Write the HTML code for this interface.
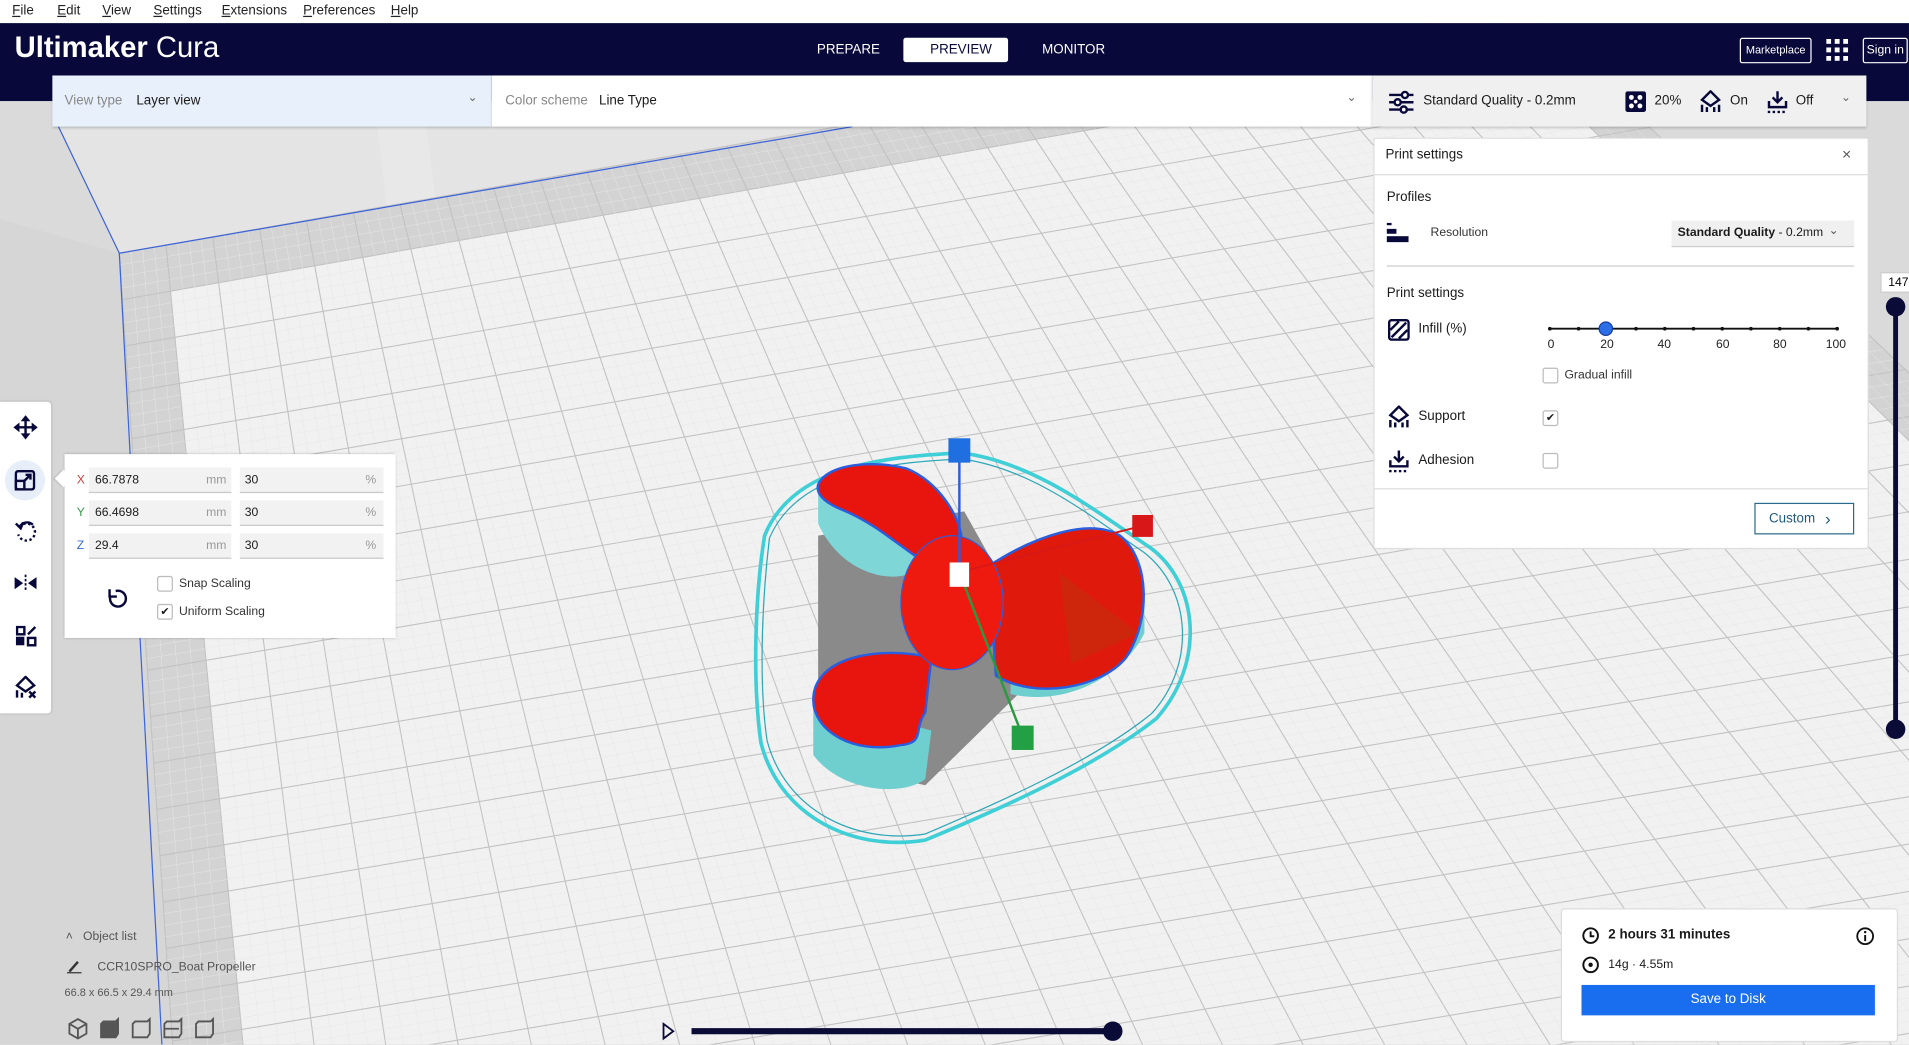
<!DOCTYPE html>
<html><head><meta charset="utf-8">
<style>
html,body{margin:0;padding:0;width:1909px;height:1045px;overflow:hidden;background:#dcdcdc}
#w{position:absolute;left:0;top:0;width:1568px;height:858px;transform:scale(1.21747);transform-origin:0 0;font-family:"Liberation Sans",sans-serif;color:#1a1a1a;overflow:hidden}
.a{position:absolute}
.t{position:absolute;white-space:nowrap}
.menu span{position:absolute;top:3px;font-size:11px;color:#222}
.fld{position:absolute;background:#f2f2f2;border-bottom:1px solid #c8c8c8;height:20px;font-size:10px}
.cb{position:absolute;width:11px;height:11px;border:1px solid #bbb;border-radius:2px;background:#fff}
</style></head><body>
<div id="w">
<svg class="a" style="left:0;top:0" width="1568" height="858" id="scene">
 <rect width="1568" height="858" fill="#dadada"/>
 <polygon points="48,104 98,208 700,104" fill="#e4e4e4"/>
 <polygon points="0,180 98,208 150,858 0,858" fill="#d6d6d6"/>
 <polygon points="310,104 350,104 360,180 320,190" fill="#e9e9e9" opacity=".8"/>
 <g id="plate"></g>
 <line x1="48" y1="104" x2="98" y2="208" stroke="#3c64d8" stroke-width="1"/>
 <line x1="98" y1="208" x2="700" y2="104" stroke="#3c64d8" stroke-width="1"/>
 <line x1="98" y1="208" x2="133" y2="858" stroke="#3c64d8" stroke-width="1"/>
 <!-- object -->
 <polygon points="672,440 672,625 760,645 862,545 792,420" fill="#8a8a8a"/>
 <path d="M628,440 C650,385 720,375 790,372 C850,380 900,420 945,450 C985,480 990,545 950,590 C900,630 820,665 760,690 C700,700 640,670 625,610 C618,560 620,490 628,440 Z" fill="none" stroke="#3fcfd6" stroke-width="3"/>
 <path d="M632,442 C654,390 722,380 790,377 C848,385 896,424 940,454 C978,484 983,545 946,586 C897,626 818,660 760,685 C703,694 645,666 630,608 C623,560 626,492 632,442 Z" fill="none" stroke="#2aa7b8" stroke-width="1"/>
 <path d="M672,400 L672,430 C690,470 730,480 750,470 L760,440 Z" fill="#7fd6d6"/>
 <path d="M668,575 L668,620 C690,650 740,655 760,640 L765,600 Z" fill="#6fcfcf"/>
 <path d="M830,540 L830,570 C870,580 920,560 940,520 L940,490 Z" fill="#6fcfcf"/>
 <path d="M672,398 C680,380 720,378 745,385 C770,395 790,425 790,445 L760,462 C740,450 720,430 690,418 C676,412 670,405 672,398 Z" fill="#e8150e" stroke="#2a5ee0" stroke-width="2"/>
 <path d="M765,540 L760,585 C750,600 760,610 740,612 C700,620 668,600 668,575 C668,540 720,530 765,540 Z" fill="#e8150e" stroke="#2a5ee0" stroke-width="2"/>
 <path d="M812,465 C850,440 895,425 920,440 C945,460 945,510 925,540 C905,565 850,575 818,555 Z" fill="#df1a0c" stroke="#2a5ee0" stroke-width="2"/>
 <path d="M870,470 L935,520 L880,545 Z" fill="#b04010" opacity=".35"/>
 <ellipse cx="782" cy="495" rx="42" ry="55" fill="#ee1a10" stroke="#2a5ee0" stroke-width="1"/>
 <line x1="788" y1="372" x2="788" y2="470" stroke="#2a5ee0" stroke-width="2"/>
 <line x1="788" y1="470" x2="938" y2="432" stroke="#d81818" stroke-width="1.5"/>
 <line x1="788" y1="470" x2="840" y2="605" stroke="#2a9a40" stroke-width="2"/>
 <rect x="779" y="360" width="18" height="20" fill="#1f6fe0"/>
 <rect x="930" y="423" width="17" height="18" fill="#d81818"/>
 <rect x="831" y="596" width="18" height="20" fill="#23a043"/>
 <rect x="780" y="462" width="16" height="20" fill="#fff"/>
 <line x1="1557" y1="252" x2="1557" y2="599" stroke="#0a0b37" stroke-width="4"/>
 <circle cx="1557" cy="252" r="8" fill="#0a0b37"/>
 <circle cx="1557" cy="599" r="8" fill="#0a0b37"/>
 <rect x="1545" y="224" width="25" height="16" fill="#fff" stroke="#ccc"/>
 <text x="1551" y="235" font-size="10" font-family="Liberation Sans">147</text>
 <line x1="568" y1="847" x2="914" y2="847" stroke="#0a0b37" stroke-width="5"/>
 <circle cx="914" cy="847" r="8" fill="#0a0b37"/>
 <path d="M545,841 L553,847 L545,853 Z" fill="none" stroke="#0a0b37" stroke-width="1.5"/>
</svg>

<div class="a menu" style="left:0;top:0;width:1568px;height:19px;background:#fff">
<span style="left:10px"><u>F</u>ile</span><span style="left:47px"><u>E</u>dit</span><span style="left:84px"><u>V</u>iew</span><span style="left:126px"><u>S</u>ettings</span><span style="left:182px"><u>E</u>xtensions</span><span style="left:249px"><u>P</u>references</span><span style="left:321px"><u>H</u>elp</span>
</div>
<div class="a" style="left:0;top:19px;width:1568px;height:64px;background:#08093a"></div>
<div class="t" style="left:12px;top:26px;font-size:24px;color:#fff"><b>Ultimaker</b> Cura</div>
<div class="t" style="left:671px;top:35px;font-size:11px;color:#fff">PREPARE</div>
<div class="a" style="left:742px;top:31px;width:86px;height:20px;background:#fff;border-radius:2px"></div>
<div class="t" style="left:764px;top:35px;font-size:11px;color:#08093a">PREVIEW</div>
<div class="t" style="left:856px;top:35px;font-size:11px;color:#fff">MONITOR</div>
<div class="a" style="left:1429px;top:31px;width:57px;height:19px;border:1px solid #fff;border-radius:2px;color:#fff;font-size:9px;line-height:19px;text-align:center">Marketplace</div>
<svg class="a" style="left:1500px;top:32px" width="18" height="18"><g fill="#fff"><rect x="0" y="0" width="4" height="4"/><rect x="7" y="0" width="4" height="4"/><rect x="14" y="0" width="4" height="4"/><rect x="0" y="7" width="4" height="4"/><rect x="7" y="7" width="4" height="4"/><rect x="14" y="7" width="4" height="4"/><rect x="0" y="14" width="4" height="4"/><rect x="7" y="14" width="4" height="4"/><rect x="14" y="14" width="4" height="4"/></g></svg>
<div class="a" style="left:1530px;top:31px;width:35px;height:19px;border:1px solid #fff;border-radius:2px;color:#fff;font-size:10px;line-height:19px;text-align:center">Sign in</div>

<div class="a" style="left:43px;top:62px;width:361px;height:42px;background:#e8f0fb;box-shadow:0 1px 2px rgba(0,0,0,.2)"></div>
<div class="t" style="left:53px;top:77px;font-size:11px;color:#888">View type</div>
<div class="t" style="left:112px;top:77px;font-size:11px">Layer view</div>
<div class="t" style="left:384px;top:75px;font-size:10px;color:#666">&#8964;</div>
<div class="a" style="left:404px;top:62px;width:723px;height:42px;background:#fff;box-shadow:0 1px 2px rgba(0,0,0,.2)"></div>
<div class="t" style="left:415px;top:77px;font-size:11px;color:#888">Color scheme</div>
<div class="t" style="left:492px;top:77px;font-size:11px">Line Type</div>
<div class="t" style="left:1106px;top:75px;font-size:10px;color:#666">&#8964;</div>
<div class="a" style="left:1127px;top:62px;width:406px;height:42px;background:#f0f0f0;box-shadow:0 1px 2px rgba(0,0,0,.2)"></div>
<svg class="a" style="left:1140px;top:74px" width="22" height="20"><g stroke="#08093a" stroke-width="2" fill="#fff"><line x1="1" y1="4" x2="21" y2="4"/><line x1="1" y1="10" x2="21" y2="10"/><line x1="1" y1="16" x2="21" y2="16"/><circle cx="14" cy="4" r="2.5"/><circle cx="8" cy="10" r="2.5"/><circle cx="13" cy="16" r="2.5"/></g></svg>
<div class="t" style="left:1169px;top:77px;font-size:11px">Standard Quality - 0.2mm</div>
<svg class="a" style="left:1335px;top:75px" width="17" height="17"><rect width="17" height="17" rx="2" fill="#08093a"/><g fill="#fff"><circle cx="5" cy="5" r="2"/><circle cx="12" cy="5" r="2"/><circle cx="5" cy="12" r="2"/><circle cx="12" cy="12" r="2"/><circle cx="8.5" cy="8.5" r="1.5"/></g></svg>
<div class="t" style="left:1359px;top:77px;font-size:11px">20%</div>
<svg class="a" style="left:1396px;top:74px" width="18" height="19"><path d="M9,1 L16,8 L9,13 L2,8 Z" fill="none" stroke="#08093a" stroke-width="2"/><g stroke="#08093a" stroke-width="2"><line x1="2" y1="12" x2="2" y2="18"/><line x1="6" y1="14" x2="6" y2="18"/><line x1="12" y1="14" x2="12" y2="18"/><line x1="16" y1="12" x2="16" y2="18"/></g></svg>
<div class="t" style="left:1421px;top:77px;font-size:11px">On</div>
<svg class="a" style="left:1451px;top:74px" width="18" height="19"><g stroke="#08093a" stroke-width="2" fill="none"><line x1="9" y1="1" x2="9" y2="10"/><path d="M5,6 L9,10 L13,6"/><path d="M2,9 L2,14 L16,14 L16,9"/></g><g fill="#08093a"><rect x="1" y="17" width="2" height="2"/><rect x="5" y="17" width="2" height="2"/><rect x="9" y="17" width="2" height="2"/><rect x="13" y="17" width="2" height="2"/></g></svg>
<div class="t" style="left:1475px;top:77px;font-size:11px">Off</div>
<div class="t" style="left:1512px;top:75px;font-size:10px;color:#666">&#8964;</div>

<div class="a" style="left:1128px;top:113px;width:405px;height:336px;background:#fff;border:1px solid #ddd;border-radius:2px"></div>
<div class="t" style="left:1138px;top:121px;font-size:11px">Print settings</div>
<div class="t" style="left:1513px;top:119px;font-size:13px;color:#555">×</div>
<div class="a" style="left:1128px;top:143px;width:406px;height:1px;background:#ddd"></div>
<div class="t" style="left:1139px;top:156px;font-size:11px">Profiles</div>
<svg class="a" style="left:1139px;top:183px" width="18" height="16"><g fill="#08093a"><rect x="0" y="0" width="4" height="2"/><rect x="0" y="5" width="8" height="4"/><rect x="0" y="11" width="18" height="5"/></g></svg>
<div class="t" style="left:1175px;top:186px;font-size:10px;color:#333">Resolution</div>
<div class="a" style="left:1373px;top:181px;width:150px;height:21px;background:#f0f0f0;border-bottom:1px solid #ccc"></div>
<div class="t" style="left:1378px;top:186px;font-size:10px"><b>Standard Quality</b> - 0.2mm</div>
<div class="t" style="left:1502px;top:184px;font-size:10px;color:#555">&#8964;</div>
<div class="a" style="left:1139px;top:218px;width:384px;height:1px;background:#ccc"></div>
<div class="t" style="left:1139px;top:235px;font-size:11px">Print settings</div>
<svg class="a" style="left:1140px;top:262px" width="18" height="18"><rect x="1" y="1" width="16" height="16" rx="2" fill="none" stroke="#08093a" stroke-width="2"/><path d="M3,15 L15,3 M2,9 L9,2 M9,16 L16,9" stroke="#08093a" stroke-width="2"/></svg>
<div class="t" style="left:1165px;top:264px;font-size:11px">Infill (%)</div>
<svg class="a" style="left:1268px;top:262px" width="250" height="30">
 <line x1="5" y1="8" x2="241" y2="8" stroke="#111" stroke-width="1.5"/>
 <g fill="#111"><circle cx="5" cy="8" r="1.5"/><circle cx="28.6" cy="8" r="1.5"/><circle cx="75.8" cy="8" r="1.5"/><circle cx="99.4" cy="8" r="1.5"/><circle cx="123" cy="8" r="1.5"/><circle cx="146.6" cy="8" r="1.5"/><circle cx="170.2" cy="8" r="1.5"/><circle cx="193.8" cy="8" r="1.5"/><circle cx="217.4" cy="8" r="1.5"/><circle cx="241" cy="8" r="1.5"/></g>
 <circle cx="51" cy="8" r="5.5" fill="#2a6ee8" stroke="#1a3c9a"/>
 <g font-size="10" font-family="Liberation Sans" fill="#222" text-anchor="middle"><text x="6" y="24">0</text><text x="52" y="24">20</text><text x="99" y="24">40</text><text x="147" y="24">60</text><text x="194" y="24">80</text><text x="240" y="24">100</text></g>
</svg>
<div class="cb" style="left:1267px;top:302px"></div>
<div class="t" style="left:1285px;top:303px;font-size:10px;color:#333">Gradual infill</div>
<svg class="a" style="left:1140px;top:333px" width="18" height="19"><path d="M9,1 L16,8 L9,13 L2,8 Z" fill="none" stroke="#08093a" stroke-width="2"/><g stroke="#08093a" stroke-width="2"><line x1="2" y1="12" x2="2" y2="18"/><line x1="6" y1="14" x2="6" y2="18"/><line x1="12" y1="14" x2="12" y2="18"/><line x1="16" y1="12" x2="16" y2="18"/></g></svg>
<div class="t" style="left:1165px;top:336px;font-size:11px">Support</div>
<div class="cb" style="left:1267px;top:337px;font-size:9px;line-height:11px;text-align:center">✔</div>
<svg class="a" style="left:1140px;top:369px" width="18" height="19"><g stroke="#08093a" stroke-width="2" fill="none"><line x1="9" y1="1" x2="9" y2="10"/><path d="M5,6 L9,10 L13,6"/><path d="M2,9 L2,14 L16,14 L16,9"/></g><g fill="#08093a"><rect x="1" y="17" width="2" height="2"/><rect x="5" y="17" width="2" height="2"/><rect x="9" y="17" width="2" height="2"/><rect x="13" y="17" width="2" height="2"/></g></svg>
<div class="t" style="left:1165px;top:372px;font-size:11px">Adhesion</div>
<div class="cb" style="left:1267px;top:372px"></div>
<div class="a" style="left:1128px;top:401px;width:406px;height:1px;background:#ddd"></div>
<div class="a" style="left:1441px;top:413px;width:80px;height:24px;border:1px solid #2a6a8a;color:#1e5a80;font-size:11px;line-height:24px"><span style="margin-left:11px">Custom</span><span style="position:absolute;left:57px;top:0;font-size:14px">&#8250;</span></div>

<div class="a" style="left:0;top:330px;width:42px;height:256px;background:#fff;border-radius:0 3px 3px 0;box-shadow:0 0 2px rgba(0,0,0,.2)"></div>
<svg class="a" style="left:11px;top:341px" width="20" height="20"><g stroke="#08093a" stroke-width="2" fill="#08093a"><line x1="10" y1="2" x2="10" y2="18"/><line x1="2" y1="10" x2="18" y2="10"/></g><g fill="#08093a"><path d="M10,0 L14,5 L6,5Z"/><path d="M10,20 L14,15 L6,15Z"/><path d="M0,10 L5,6 L5,14Z"/><path d="M20,10 L15,6 L15,14Z"/></g></svg>
<div class="a" style="left:4px;top:378px;width:33px;height:33px;border-radius:50%;background:#e6eefa"></div>
<svg class="a" style="left:12px;top:386px" width="17" height="17"><rect x="1" y="1" width="15" height="15" rx="2" fill="none" stroke="#08093a" stroke-width="2"/><rect x="1" y="9" width="7" height="7" fill="none" stroke="#08093a" stroke-width="2"/><path d="M8,9 L13,4 M9,4 L13,4 L13,8" stroke="#08093a" stroke-width="2" fill="none"/></svg>
<svg class="a" style="left:12px;top:427px" width="18" height="18"><path d="M4,6 A7,7 0 1 1 3,12" fill="none" stroke="#08093a" stroke-width="2" stroke-dasharray="2 2"/><path d="M4,6 A7,7 0 0 1 15,4" fill="none" stroke="#08093a" stroke-width="2"/><path d="M1,3 L5,7 L7,2" fill="none" stroke="#08093a" stroke-width="2"/></svg>
<svg class="a" style="left:11px;top:471px" width="20" height="16"><path d="M1,3 L8,8 L1,13Z M19,3 L12,8 L19,13Z" fill="#08093a"/><line x1="10" y1="1" x2="10" y2="15" stroke="#08093a" stroke-width="1.5" stroke-dasharray="2 1.5"/></svg>
<svg class="a" style="left:13px;top:514px" width="17" height="17"><g fill="#08093a"><rect x="0" y="9" width="7" height="7"/></g><g fill="none" stroke="#08093a" stroke-width="2"><rect x="1" y="1" width="6" height="6"/><rect x="10" y="10" width="6" height="6"/><path d="M10,7 L16,1"/></g></svg>
<svg class="a" style="left:12px;top:555px" width="19" height="19"><path d="M9,1 L16,8 L9,13 L2,8 Z" fill="none" stroke="#08093a" stroke-width="2"/><g stroke="#08093a" stroke-width="2"><line x1="2" y1="12" x2="2" y2="18"/><line x1="6" y1="14" x2="6" y2="18"/><path d="M12,13 L17,18 M17,13 L12,18"/></g></svg>

<div class="a" style="left:53px;top:373px;width:272px;height:151px;background:#fff;box-shadow:0 0 2px rgba(0,0,0,.25)"></div>
<div class="a" style="left:47px;top:388px;width:10px;height:10px;background:#fff;transform:rotate(45deg);box-shadow:-1px 1px 1px rgba(0,0,0,.12)"></div>
<div class="t" style="left:63px;top:389px;font-size:10px;color:#d04040">X</div>
<div class="t" style="left:63px;top:416px;font-size:10px;color:#3a9a50">Y</div>
<div class="t" style="left:63px;top:443px;font-size:10px;color:#3a6ad0">Z</div>
<div class="fld" style="left:73px;top:384px;width:117px"><span class="t" style="left:5px;top:5px">66.7878</span><span class="t" style="right:4px;top:5px;color:#999">mm</span></div>
<div class="fld" style="left:197px;top:384px;width:118px"><span class="t" style="left:4px;top:5px">30</span><span class="t" style="right:6px;top:5px;color:#999">%</span></div>
<div class="fld" style="left:73px;top:411px;width:117px"><span class="t" style="left:5px;top:5px">66.4698</span><span class="t" style="right:4px;top:5px;color:#999">mm</span></div>
<div class="fld" style="left:197px;top:411px;width:118px"><span class="t" style="left:4px;top:5px">30</span><span class="t" style="right:6px;top:5px;color:#999">%</span></div>
<div class="fld" style="left:73px;top:438px;width:117px"><span class="t" style="left:5px;top:5px">29.4</span><span class="t" style="right:4px;top:5px;color:#999">mm</span></div>
<div class="fld" style="left:197px;top:438px;width:118px"><span class="t" style="left:4px;top:5px">30</span><span class="t" style="right:6px;top:5px;color:#999">%</span></div>
<svg class="a" style="left:87px;top:482px" width="18" height="18"><path d="M4,7 A6.5,6.5 0 1 0 8,3.5" fill="none" stroke="#08093a" stroke-width="2"/><path d="M3,2 L3,8 L9,8" fill="none" stroke="#08093a" stroke-width="2"/></svg>
<div class="cb" style="left:129px;top:473px"></div>
<div class="t" style="left:147px;top:474px;font-size:10px;color:#333">Snap Scaling</div>
<div class="cb" style="left:129px;top:496px;font-size:9px;line-height:11px;text-align:center">✔</div>
<div class="t" style="left:147px;top:497px;font-size:10px;color:#333">Uniform Scaling</div>

<div class="t" style="left:54px;top:764px;font-size:10px;color:#555">&#708;&nbsp;&nbsp;&nbsp;Object list</div>
<svg class="a" style="left:55px;top:788px" width="12" height="12"><path d="M2,10 L9,2" stroke="#333" stroke-width="2"/><line x1="0" y1="11" x2="12" y2="11" stroke="#333"/></svg>
<div class="t" style="left:80px;top:789px;font-size:10px;color:#555">CCR10SPRO_Boat Propeller</div>
<div class="t" style="left:53px;top:810px;font-size:9px;color:#555">66.8 x 66.5 x 29.4 mm</div>
<svg class="a" style="left:55px;top:835px" width="125" height="20"><g fill="none" stroke="#555" stroke-width="1.5"><path d="M9,2 L16,6 L16,14 L9,18 L2,14 L2,6 Z M2,6 L9,10 L16,6 M9,10 L9,18"/><path d="M30,4 L40,4 L42,2 L42,14 L40,17 L28,17 L28,6 Z" fill="#555"/><path d="M56,4 L66,4 L68,2 L68,14 L66,17 L54,17 L54,6 Z"/><path d="M82,4 L92,4 L94,2 L94,14 L92,17 L80,17 L80,6 Z M80,10 L92,10"/><path d="M108,4 L118,4 L120,2 L120,14 L118,17 L106,17 L106,6 Z"/></g></svg>

<div class="a" style="left:1282px;top:746px;width:275px;height:108px;background:#fff;border:1px solid #ddd;border-radius:3px"></div>
<svg class="a" style="left:1299px;top:761px" width="15" height="15"><circle cx="7.5" cy="7.5" r="6" fill="none" stroke="#111" stroke-width="1.6"/><path d="M7.5,4 L7.5,8 L10.5,8" fill="none" stroke="#111" stroke-width="1.6"/></svg>
<div class="t" style="left:1321px;top:762px;font-size:11px;font-weight:bold">2 hours 31 minutes</div>
<svg class="a" style="left:1524px;top:761px" width="16" height="16"><circle cx="8" cy="8" r="6.5" fill="none" stroke="#111" stroke-width="1.5"/><line x1="8" y1="7" x2="8" y2="12" stroke="#111" stroke-width="1.6"/><circle cx="8" cy="4.6" r="1" fill="#111"/></svg>
<svg class="a" style="left:1299px;top:785px" width="15" height="15"><circle cx="7.5" cy="7.5" r="6" fill="none" stroke="#111" stroke-width="1.6"/><circle cx="7.5" cy="7.5" r="1.8" fill="#111"/></svg>
<div class="t" style="left:1321px;top:787px;font-size:10px">14g · 4.55m</div>
<div class="a" style="left:1299px;top:809px;width:241px;height:25px;background:#196ef0;color:#fff;font-size:11px;line-height:25px;text-align:center">Save to Disk</div>
</div>
<script>
(function(){
var g=document.getElementById('plate');var ns='http://www.w3.org/2000/svg';
var P00=[98,208],P10=[1250,5],P11=[2300,1000],P01=[175,1350];
function m(u,v){return[(1-u)*(1-v)*P00[0]+u*(1-v)*P10[0]+u*v*P11[0]+(1-u)*v*P01[0],(1-u)*(1-v)*P00[1]+u*(1-v)*P10[1]+u*v*P11[1]+(1-u)*v*P01[1]];}
function poly(pts,f){var p=document.createElementNS(ns,'polygon');p.setAttribute('points',pts.map(function(q){return q.join(',')}).join(' '));p.setAttribute('fill',f);g.appendChild(p);}
var N=30,b=1/N;
poly([m(0,0),m(1,0),m(1,1),m(0,1)],'#d3d3d3');
poly([m(b,b),m(1-b,b),m(1-b,1-b),m(b,1-b)],'#f1f1f1');
function ln(a,c,col,w){var l=document.createElementNS(ns,'line');l.setAttribute('x1',a[0]);l.setAttribute('y1',a[1]);l.setAttribute('x2',c[0]);l.setAttribute('y2',c[1]);l.setAttribute('stroke',col);l.setAttribute('stroke-width',w);g.appendChild(l);}
for(var i=0;i<=N*4;i++){var t=i/(N*4);var maj=i%4==0;var c=maj?'#c2c2c2':'#e6e6e6';var w=maj?0.9:0.4;ln(m(t,0),m(t,1),c,w);ln(m(0,t),m(1,t),c,w);}
})();
</script>
</body></html>
